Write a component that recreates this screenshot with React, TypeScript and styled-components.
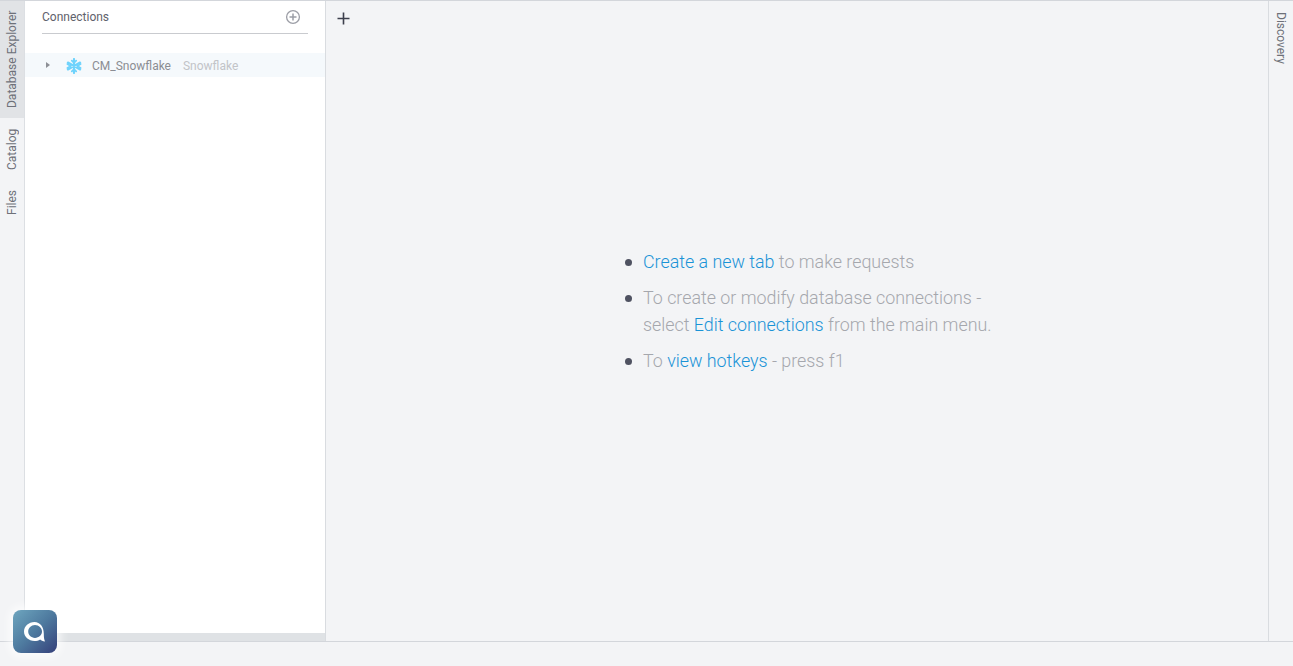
import React from "react";
import styled, { createGlobalStyle } from "styled-components";

const Global = createGlobalStyle`
  html, body { margin: 0; padding: 0; height: 100%; background: #f3f4f6; overflow: hidden; }
  #root { height: 100%; }
  * { box-sizing: border-box; }
`;

const Page = styled.div`
  position: relative;
  width: 1293px;
  height: 666px;
  display: flex;
  flex-direction: column;
  font-family: Roboto, "Liberation Sans", sans-serif;
  background: #f3f4f6;
  border-top: 1px solid #d3d6db;
`;

const Workspace = styled.div`
  flex: 1;
  min-height: 0;
  display: flex;
`;

const StatusBar = styled.div`
  height: 25px;
  flex: none;
  border-top: 1px solid #d3d6db;
  background: #f3f4f6;
`;

const Rail = styled.div`
  width: 25px;
  flex: none;
  display: flex;
  flex-direction: column;
  border-right: 1px solid #dcdfe3;
`;

const RightRail = styled(Rail)`
  border-right: none;
  border-left: 1px solid #d9dce0;
`;

const VerticalTab = styled.div<{ $active?: boolean; $h: number; $right?: boolean; $shift?: number }>`
  height: ${(p) => p.$h}px;
  width: ${(p) => (p.$right ? 23 : 24)}px;
  flex: none;
  display: flex;
  align-items: center;
  justify-content: center;
  writing-mode: vertical-rl;
  transform: ${(p) => (p.$right ? "none" : "rotate(180deg)")};
  font-size: 12px;
  color: #6e7179;
  padding-bottom: ${(p) => p.$shift ?? 0}px;
  background: ${(p) => (p.$active ? "#e1e3e6" : "transparent")};
`;

const Panel = styled.div`
  width: 301px;
  flex: none;
  display: flex;
  flex-direction: column;
  background: #fff;
  border-right: 1px solid #d9dce0;
`;

const PanelHeader = styled.div`
  height: 33px;
  margin: 0 17px;
  flex: none;
  display: flex;
  align-items: center;
  justify-content: space-between;
  border-bottom: 1px solid #c9cbcf;
  font-size: 12px;
  color: #5f626c;
`;

const AddButton = styled.span`
  display: flex;
  width: 16px;
  height: 16px;
  margin-right: 7px;
  color: #9c9ea6;
`;

const Tree = styled.div`
  flex: 1;
  padding-top: 19px;
`;

const TreeRow = styled.div`
  height: 24px;
  display: flex;
  align-items: center;
  background: #f5f9fc;
  font-size: 12px;
  padding-top: 1px;
`;

const Caret = styled.span`
  width: 0;
  height: 0;
  margin-left: 21px;
  margin-top: -1px;
  border-left: 4px solid #8d9096;
  border-top: 3.5px solid transparent;
  border-bottom: 3.5px solid transparent;
`;

const DbIcon = styled.span`
  display: flex;
  margin-left: 16px;
  width: 16px;
  height: 16px;
`;

const DbName = styled.span`
  margin-left: 10px;
  color: #8b8d93;
`;

const DbType = styled.span`
  margin-left: 12px;
  color: #c2c4c8;
`;

const PanelScroll = styled.div`
  height: 8px;
  flex: none;
  background: #dfe2e5;
`;

const Main = styled.div`
  flex: 1;
  min-width: 0;
  display: flex;
  flex-direction: column;
`;

const TabBar = styled.div`
  height: 33px;
  flex: none;
  padding: 11px 0 0 11px;
  color: #3c3f4c;
`;

const PlusIcon = styled.svg`
  display: block;
  width: 13px;
  height: 13px;
`;

const Hints = styled.ul`
  margin: 0;
  padding: 0;
  list-style: none;
  position: relative;
  left: 317px;
  top: 214px;
  width: 380px;
  font-size: 17.85px;
  font-weight: 300;
  line-height: 27px;
  color: #a5a7ad;
`;

const Hint = styled.li`
  position: relative;
  margin-bottom: 9px;

  &::before {
    content: "";
    position: absolute;
    left: -18px;
    top: 11px;
    width: 7px;
    height: 7px;
    border-radius: 50%;
    background: #4f5261;
  }
`;

const HintLink = styled.span`
  color: #1a93d6;
`;

const LogoBadge = styled.div`
  position: absolute;
  left: 13px;
  top: 609px;
  width: 44px;
  height: 43px;
  border-radius: 8px;
  display: flex;
  align-items: center;
  justify-content: center;
  background: linear-gradient(135deg, #6ea6bf 0%, #4e7a9f 50%, #35407a 100%);
  box-shadow: 0 0 8px 4px rgba(255, 255, 255, 0.7);
`;

const Snowflake = () => (
  <svg viewBox="0 0 16 16" width="16" height="16" fill="none" stroke="#6fd3fc" strokeLinecap="round">
    <path d="M8 1v14M1.900 4.500l12.200 7M1.900 11.500l12.200-7" strokeWidth="2.100" />
    <path d="M5.800 2.600L8 4.800l2.200-2.200M5.800 13.400L8 11.200l2.200 2.200M1.400 6l3.200 2-3.200 2M14.600 6l-3.200 2 3.200 2" strokeWidth="1.800" />
  </svg>
);

const LogoMark = () => (
  <svg viewBox="0 0 24 22" width="24" height="22">
    <path
      fillRule="evenodd"
      fill="#fff"
      d="M11.500 1C5.700 1 1 5.300 1 10.600s4.700 9.400 10.500 9.400c2.100 0 4.100-.6 5.700-1.600.9 1 2.600 1.800 4.800 2-1-1.800-1.200-4.500-1.200-7.600C20.800 6 17.100 1 11.500 1zM12 3.900c-3.900 0-6.800 3-6.800 6.700s2.900 6.300 6.800 6.300 7-2.600 7-6.300-3.100-6.700-7-6.700z"
    />
  </svg>
);

export default function App() {
  return (
    <Page>
      <Global />
      <Workspace>
        <Rail>
          <VerticalTab $active $h={117}>Database Explorer</VerticalTab>
          <VerticalTab $h={61} $shift={1}>Catalog</VerticalTab>
          <VerticalTab $h={46}>Files</VerticalTab>
        </Rail>
        <Panel>
          <PanelHeader>
            <span>Connections</span>
            <AddButton>
              <svg viewBox="0 0 16 16" width="16" height="16" fill="none" stroke="currentColor">
                <circle cx="8" cy="8" r="6.400" strokeWidth="1.300" />
                <path d="M8 4.500v7M4.500 8h7" strokeWidth="1.500" />
              </svg>
            </AddButton>
          </PanelHeader>
          <Tree>
            <TreeRow>
              <Caret />
              <DbIcon><Snowflake /></DbIcon>
              <DbName>CM_Snowflake</DbName>
              <DbType>Snowflake</DbType>
            </TreeRow>
          </Tree>
          <PanelScroll />
        </Panel>
        <Main>
          <TabBar>
            <PlusIcon viewBox="0 0 13 13" fill="none" stroke="currentColor" strokeWidth="1.600">
              <path d="M6.500 0.500v12M0.500 6.500h12" />
            </PlusIcon>
          </TabBar>
          <Hints>
            <Hint><HintLink>Create a new tab</HintLink> to make requests</Hint>
            <Hint>To create or modify database connections -<br />select <HintLink>Edit connections</HintLink> from the main menu.</Hint>
            <Hint>To <HintLink>view hotkeys</HintLink> - press f1</Hint>
          </Hints>
        </Main>
        <RightRail>
          <VerticalTab $right $h={73}>Discovery</VerticalTab>
        </RightRail>
      </Workspace>
      <StatusBar />
      <LogoBadge><LogoMark /></LogoBadge>
    </Page>
  );
}
